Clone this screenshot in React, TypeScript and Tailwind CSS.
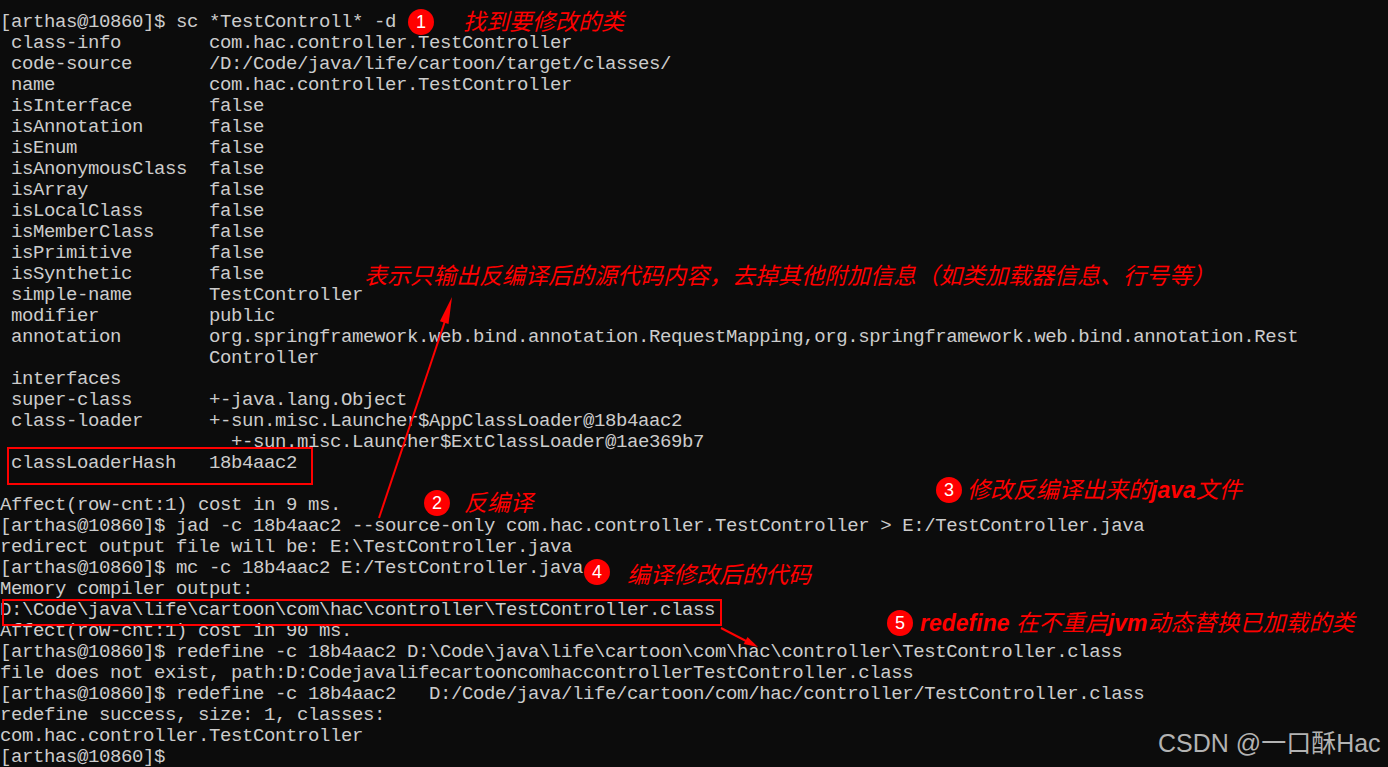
import type { ReactNode } from "react";

const kv = (key: string, value = "") => " " + key.padEnd(18) + value;

const lines: string[] = [
  "[arthas@10860]$ sc *TestControll* -d",
  kv("class-info", "com.hac.controller.TestController"),
  kv("code-source", "/D:/Code/java/life/cartoon/target/classes/"),
  kv("name", "com.hac.controller.TestController"),
  kv("isInterface", "false"),
  kv("isAnnotation", "false"),
  kv("isEnum", "false"),
  kv("isAnonymousClass", "false"),
  kv("isArray", "false"),
  kv("isLocalClass", "false"),
  kv("isMemberClass", "false"),
  kv("isPrimitive", "false"),
  kv("isSynthetic", "false"),
  kv("simple-name", "TestController"),
  kv("modifier", "public"),
  kv(
    "annotation",
    "org.springframework.web.bind.annotation.RequestMapping,org.springframework.web.bind.annotation.Rest"
  ),
  kv("", "Controller"),
  kv("interfaces"),
  kv("super-class", "+-java.lang.Object"),
  kv("class-loader", "+-sun.misc.Launcher$AppClassLoader@18b4aac2"),
  kv("", "  +-sun.misc.Launcher$ExtClassLoader@1ae369b7"),
  kv("classLoaderHash", "18b4aac2"),
  "",
  "Affect(row-cnt:1) cost in 9 ms.",
  "[arthas@10860]$ jad -c 18b4aac2 --source-only com.hac.controller.TestController > E:/TestController.java",
  "redirect output file will be: E:\\TestController.java",
  "[arthas@10860]$ mc -c 18b4aac2 E:/TestController.java",
  "Memory compiler output:",
  "D:\\Code\\java\\life\\cartoon\\com\\hac\\controller\\TestController.class",
  "Affect(row-cnt:1) cost in 90 ms.",
  "[arthas@10860]$ redefine -c 18b4aac2 D:\\Code\\java\\life\\cartoon\\com\\hac\\controller\\TestController.class",
  "file does not exist, path:D:CodejavalifecartooncomhaccontrollerTestController.class",
  "[arthas@10860]$ redefine -c 18b4aac2   D:/Code/java/life/cartoon/com/hac/controller/TestController.class",
  "redefine success, size: 1, classes:",
  "com.hac.controller.TestController",
  "[arthas@10860]$",
];

const Badge = ({ n }: { n: number }) => (
  <div className="flex h-[26px] w-[26px] shrink-0 items-center justify-center rounded-full bg-[#ff0000] text-[18px] leading-none text-white font-['Liberation_Sans',sans-serif]">
    {n}
  </div>
);

const Label = ({ children }: { children: ReactNode }) => (
  <div className="whitespace-nowrap text-[23px] leading-[24px] italic text-[#ff0000] font-['Liberation_Sans','Noto_Sans_CJK_SC',sans-serif]">
    {children}
  </div>
);

export default function App() {
  return (
    <div className="relative h-[767px] w-[1388px] overflow-hidden bg-[#0c0c0c]">
      {/* Console output */}
      <div className="pt-[12px] font-['Liberation_Mono',monospace] text-[19px] leading-[21px] tracking-[-0.4px] text-[#cccccc] whitespace-pre">
        {lines.map((line, i) => (
          <div key={i} className="h-[21px]">
            {line}
          </div>
        ))}
      </div>

      {/* Boxes */}
      <div className="absolute left-[7px] top-[447px] h-[38px] w-[306px] border-2 border-[#ff0000]" />
      <div className="absolute left-[2px] top-[599px] h-[27px] w-[720px] border-2 border-[#ff0000]" />

      {/* Arrows */}
      <svg className="pointer-events-none absolute inset-0" width="1388" height="767">
        <line x1="379" y1="518" x2="446" y2="318" stroke="#ff0000" strokeWidth="2" />
        <polygon points="452,297 448.5,324 439.9,321.2" fill="#ff0000" />
        <line x1="721" y1="628" x2="748" y2="642" stroke="#ff0000" strokeWidth="2" />
        <polygon points="758,647 743.7,644 747.5,637" fill="#ff0000" />
      </svg>

      {/* Step annotations */}
      <div className="absolute left-[408px] top-[9px] flex items-center gap-[29px]">
        <Badge n={1} />
        <Label>找到要修改的类</Label>
      </div>

      <div className="absolute left-[364px] top-[264px]">
        <Label>表示只输出反编译后的源代码内容，去掉其他附加信息（如类加载器信息、行号等）</Label>
      </div>

      <div className="absolute left-[424px] top-[490px] flex items-center gap-[14px]">
        <Badge n={2} />
        <Label>反编译</Label>
      </div>

      <div className="absolute left-[936px] top-[477px] flex items-center gap-[5px]">
        <Badge n={3} />
        <Label>
          修改反编译出来的<span className="font-bold">java</span>文件
        </Label>
      </div>

      <div className="absolute left-[584px] top-[557px] flex items-center gap-[17px]">
        <Badge n={4} />
        <div className="pt-[6px]">
          <Label>编译修改后的代码</Label>
        </div>
      </div>

      <div className="absolute left-[887px] top-[610px] flex items-center gap-[7px]">
        <Badge n={5} />
        <Label>
          <span className="font-bold">redefine</span> 在不重启<span className="font-bold">jvm</span>动态替换已加载的类
        </Label>
      </div>

      {/* Watermark */}
      <div className="absolute left-[1158px] top-[731px] text-[25px] leading-[24px] text-[#b3b3b3] font-['Liberation_Sans','Noto_Sans_CJK_SC',sans-serif]">
        CSDN @一口酥Hac
      </div>
    </div>
  );
}
